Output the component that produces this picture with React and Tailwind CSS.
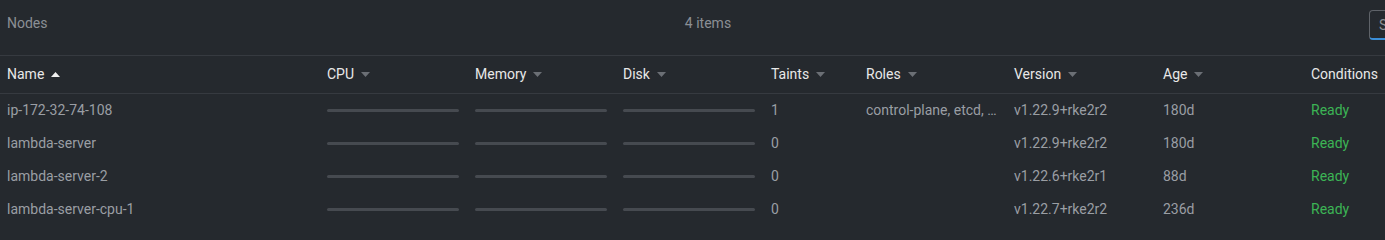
import React from "react";

const cols = [
  { key: "name", label: "Name", w: "w-[320px]", sort: "up" },
  { key: "cpu", label: "CPU", w: "w-[148px]" },
  { key: "mem", label: "Memory", w: "w-[148px]" },
  { key: "disk", label: "Disk", w: "w-[148px]" },
  { key: "taints", label: "Taints", w: "w-[95px]" },
  { key: "roles", label: "Roles", w: "w-[148px]" },
  { key: "version", label: "Version", w: "w-[149px]" },
  { key: "age", label: "Age", w: "w-[148px]" },
  { key: "cond", label: "Conditions", w: "w-[140px]" },
];

const rows = [
  { name: "ip-172-32-74-108", taints: "1", roles: "control-plane, etcd, …", version: "v1.22.9+rke2r2", age: "180d" },
  { name: "lambda-server", taints: "0", roles: "", version: "v1.22.9+rke2r2", age: "180d" },
  { name: "lambda-server-2", taints: "0", roles: "", version: "v1.22.6+rke2r1", age: "88d" },
  { name: "lambda-server-cpu-1", taints: "0", roles: "", version: "v1.22.7+rke2r2", age: "236d" },
];

function Caret({ up }) {
  return (
    <svg width="9" height="5" viewBox="0 0 9 5" className="ml-[7px] shrink-0">
      {up ? (
        <path d="M0 5 L4.5 0 L9 5 Z" fill="#f0f0f0" />
      ) : (
        <path d="M0 0 L4.5 5 L9 0 Z" fill="#6b6f75" />
      )}
    </svg>
  );
}

function Bar() {
  return <div className="h-[3px] w-[132px] rounded-full bg-[#464a50]" />;
}

export default function App() {
  return (
    <div
      className="w-[1385px] h-[240px] overflow-hidden bg-[#25292e]"
      style={{ fontFamily: "Roboto, 'Liberation Sans', sans-serif" }}
    >
      <div className="w-[1416px]">
        <div className="grid grid-cols-[1fr_auto_1fr] items-start h-[56px] border-b border-[#363a40] text-[14px] leading-[20px]">
          <div className="pl-[7px] mt-[13px] text-[#8b8f95]">Nodes</div>
          <div className="mt-[13px] text-[#8b8f95]">4 items</div>
          <div className="flex justify-end">
            <div className="w-[47px] h-[30px] mt-[10px] rounded-[4px] border border-[#5f6369] border-b-2 border-b-[#3b8fd9] flex items-center pl-[8px] overflow-hidden text-[14px] text-[#8b8f95] whitespace-nowrap">
              <span className="w-px h-[16px] bg-[#cfd2d6] mr-[1px]" />
              Search
            </div>
          </div>
        </div>
        <div className="flex h-[38px] items-center border-b border-[#363a40] text-[14px] text-[#e8e8e8]">
          {cols.map((c) => (
            <div key={c.key} className={`${c.w} shrink-0 pl-[7px] flex items-center`}>
              <span>{c.label}</span>
              <Caret up={c.sort === "up"} />
            </div>
          ))}
        </div>
        {rows.map((r) => (
          <div key={r.name} className="flex h-[33px] items-center text-[14px] text-[#9a9ea4]">
            <div className="w-[320px] shrink-0 pl-[7px]">{r.name}</div>
            <div className="w-[148px] shrink-0 pl-[7px]"><Bar /></div>
            <div className="w-[148px] shrink-0 pl-[7px]"><Bar /></div>
            <div className="w-[148px] shrink-0 pl-[7px]"><Bar /></div>
            <div className="w-[95px] shrink-0 pl-[7px]">{r.taints}</div>
            <div className="w-[148px] shrink-0 pl-[7px] whitespace-nowrap">{r.roles}</div>
            <div className="w-[149px] shrink-0 pl-[7px]">{r.version}</div>
            <div className="w-[148px] shrink-0 pl-[7px]">{r.age}</div>
            <div className="w-[140px] shrink-0 pl-[7px] text-[#3cb455]">Ready</div>
          </div>
        ))}
      </div>
    </div>
  );
}
